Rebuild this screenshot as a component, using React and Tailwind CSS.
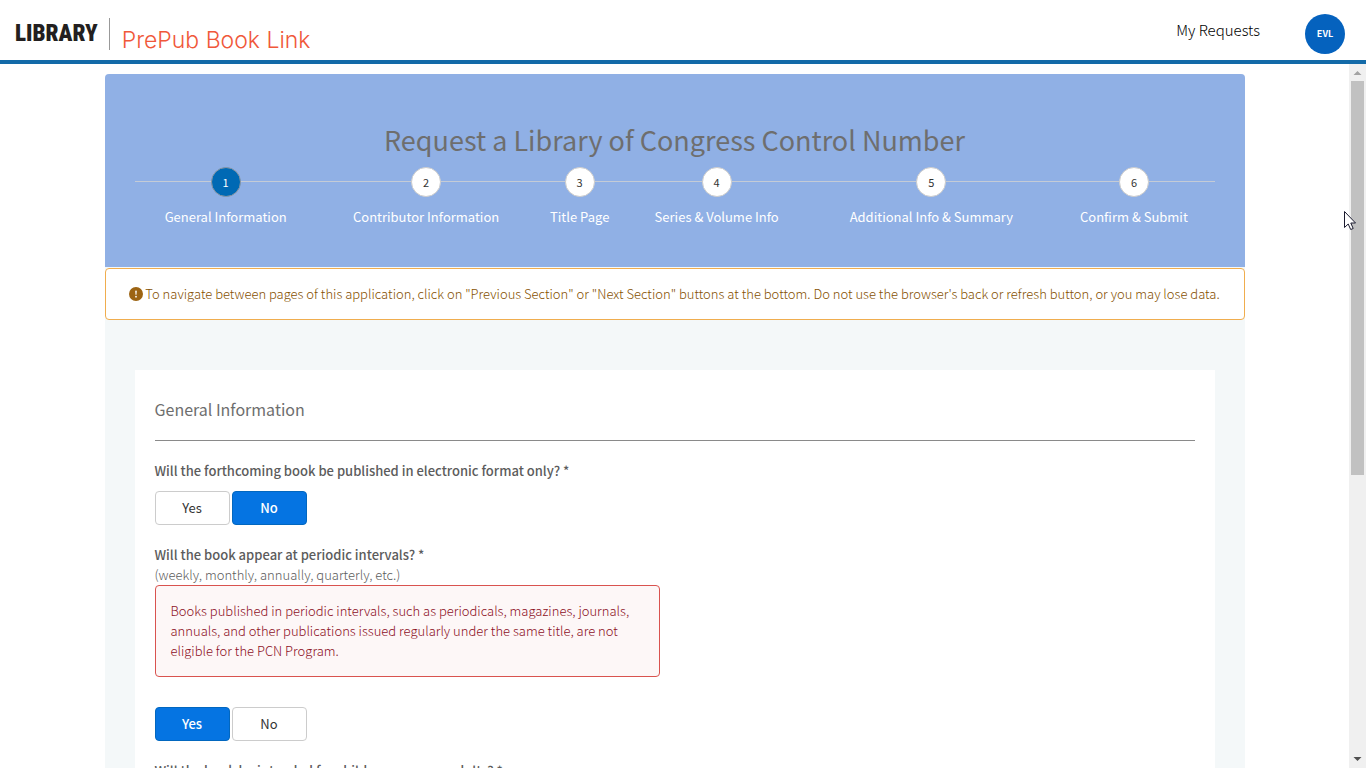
import { useState } from "react";
import { BsExclamationCircleFill } from "react-icons/bs";

const steps = [
  "General Information",
  "Contributor Information",
  "Title Page",
  "Series & Volume Info",
  "Additional Info & Summary",
  "Confirm & Submit",
];

function YesNo({ label, value, onChange }) {
  const on = "border-[#0267bf] bg-[#0574e2] font-medium text-white";
  const off = "border-[#cccccc] bg-white font-normal text-[#333333]";

  return (
    <div role="group" aria-label={label} className="flex gap-[2px]">
      {["Yes", "No"].map((option) => (
        <button
          key={option}
          type="button"
          aria-pressed={value === option}
          onClick={() => onChange(option)}
          className={`h-[34px] w-[75px] rounded border ${value === option ? on : off}`}
        >
          {option}
        </button>
      ))}
    </div>
  );
}

export default function App() {
  const [step, setStep] = useState(0);
  const [electronic, setElectronic] = useState("No");
  const [periodic, setPeriodic] = useState("Yes");
  const [young, setYoung] = useState("No");

  return (
    <div className="flex h-screen flex-col overflow-hidden bg-white font-['Noto_Sans_CJK_SC',sans-serif] text-[13px] leading-5 font-light text-[#5c5c5c]">
      {/* Header */}
      <header className="flex h-16 shrink-0 items-center justify-between border-b-4 border-[#136aa8] pr-[21px] pl-[15px]">
        <a href="#" className="flex items-center pt-2">
          <span className="font-['Roboto_Condensed',sans-serif] text-[23px] leading-8 font-black text-[#231f20]">
            LIBRARY
          </span>
          <span className="ml-[11px] h-8 w-px bg-[#999999]" />
          <span className="ml-3 pt-3 font-['Inter',sans-serif] text-[23px] leading-7 font-light text-[#f0583a]">
            PrePub Book Link
          </span>
        </a>
        <nav className="flex items-center gap-[45px]">
          <a href="#" className="text-[15px] text-black">
            My Requests
          </a>
          <button className="mt-2 h-10 w-10 rounded-full bg-[#0562be] text-[9px] font-bold text-white">
            EVL
          </button>
        </nav>
      </header>

      <div className="flex min-h-0 flex-1">
        <main className="min-w-0 flex-1 overflow-hidden pt-[10px]">
          <div className="mx-auto max-w-[1140px] rounded-t bg-[#f4f8f9]">
            {/* Step wizard */}
            <section className="mb-px rounded-t bg-[#90b0e5] px-[30px] pt-[46px] pb-10">
              <h1 className="text-center text-[27px] leading-10 font-normal text-[#6e6e6e]">
                Request a Library of Congress Control Number
              </h1>
              <div className="relative mt-[7px]">
                <div className="absolute top-[14px] h-px w-full bg-[#c4cbd6]" />
                <ol className="relative table w-full">
                  {steps.map((name, i) => (
                    <li key={name} className="table-cell text-center">
                      <button
                        type="button"
                        onClick={() => setStep(i)}
                        className="inline-flex flex-col items-center font-normal whitespace-nowrap text-white"
                      >
                        <span
                          className={`flex h-[30px] w-[30px] items-center justify-center rounded-full border text-[11px] ${
                            step === i
                              ? "border-[#8a96a3] bg-[#0069b4] text-white"
                              : "border-[#cccccc] bg-white text-[#333333]"
                          }`}
                        >
                          {i + 1}
                        </span>
                        <span className="mt-[10px]">{name}</span>
                      </button>
                    </li>
                  ))}
                </ol>
              </div>
            </section>

            {/* Navigation warning */}
            <div className="flex items-center justify-center gap-[2px] rounded border border-[#f0ad4e] bg-white py-[15px] text-[#855000]">
              <BsExclamationCircleFill className="h-[14px] w-[14px] shrink-0 text-[#9c6413]" />
              <p>
                To navigate between pages of this application, click on "Previous Section" or "Next Section" buttons at
                the bottom. Do not use the browser's back or refresh button, or you may lose data.
              </p>
            </div>

            {/* Form */}
            <div className="px-[30px] pt-[50px] pb-10">
              <form className="bg-white p-5">
                <h2 className="border-b border-[#8a8a8a] pt-[9px] pb-[21px] text-[16px] leading-5 font-normal text-[#6e6e6e]">
                  General Information
                </h2>

                <div className="mt-5 font-medium">
                  Will the forthcoming book be published in electronic format only? *
                </div>
                <div className="mt-[10px]">
                  <YesNo label="Electronic format only" value={electronic} onChange={setElectronic} />
                </div>

                <div className="mt-5 font-medium">Will the book appear at periodic intervals? *</div>
                <p>(weekly, monthly, annually, quarterly, etc.)</p>
                {periodic === "Yes" && (
                  <div
                    role="alert"
                    className="mb-[30px] max-w-[505px] rounded border border-[#d9534f] bg-[#fdf7f7] p-[15px] text-[#8c0f1e]"
                  >
                    Books published in periodic intervals, such as periodicals, magazines, journals, annuals, and other
                    publications issued regularly under the same title, are not eligible for the PCN Program.
                  </div>
                )}
                <YesNo label="Periodic intervals" value={periodic} onChange={setPeriodic} />

                <div className="mt-5 font-medium">Will the book be intended for children or young adults? *</div>
                <div className="mt-[10px]">
                  <YesNo label="Children or young adults" value={young} onChange={setYoung} />
                </div>
              </form>
            </div>
          </div>
        </main>

        {/* Scrollbar */}
        <div className="flex w-[17px] shrink-0 flex-col items-center bg-[#f0f0f0]">
          <svg viewBox="0 0 17 17" className="h-[17px] w-[17px] shrink-0">
            <path d="M4.500 11h8L8.500 7z" fill="#a3a3a3" />
          </svg>
          <div className="h-[56%] w-[13px] bg-[#c1c1c1]" />
          <svg viewBox="0 0 17 17" className="mt-auto h-[17px] w-[17px] shrink-0">
            <path d="M4.500 6h8L8.500 10z" fill="#505050" />
          </svg>
        </div>
      </div>

      {/* Mouse pointer */}
      <svg viewBox="0 0 12 19" className="pointer-events-none absolute top-[211px] left-[1344px] h-[19px] w-3">
        <path d="M.5.5v16l3.700-3.500 2.500 5.500 2.500-1-2.400-5.500h4.700z" fill="#fff" stroke="#1a1a2e" />
      </svg>
    </div>
  );
}
